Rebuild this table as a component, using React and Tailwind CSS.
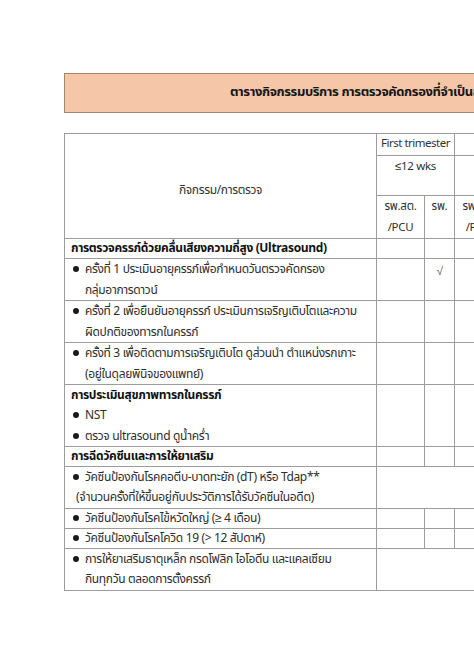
import React from 'react';

const GROUPS = [
  { label: 'First trimester', range: '≤12 wks' },
  { label: 'Second trimester', range: '13-27 wks' },
  { label: 'Third trimester', range: '28-40 wks' },
];

// data columns to the right of the activity column
const COLS = GROUPS.length * 2;

const ROWS = [
  { type: 'head', text: 'การตรวจครรภ์ด้วยคลื่นเสียงความถี่สูง (Ultrasound)' },
  {
    type: 'item',
    lines: ['ครั้งที่ 1 ประเมินอายุครรภ์เพื่อกำหนดวันตรวจคัดกรอง', 'กลุ่มอาการดาวน์'],
    marks: { 1: '√' },
  },
  { type: 'item', lines: ['ครั้งที่ 2 เพื่อยืนยันอายุครรภ์ ประเมินการเจริญเติบโตและความ', 'ผิดปกติของทารกในครรภ์'] },
  { type: 'item', lines: ['ครั้งที่ 3 เพื่อติดตามการเจริญเติบโต ดูส่วนนำ ตำแหน่งรกเกาะ', '(อยู่ในดุลยพินิจของแพทย์)'] },
  { type: 'group', head: 'การประเมินสุขภาพทารกในครรภ์', items: ['NST', 'ตรวจ ultrasound ดูน้ำคร่ำ'] },
  { type: 'head', text: 'การฉีดวัคซีนและการให้ยาเสริม' },
  {
    type: 'item',
    lines: ['วัคซีนป้องกันโรคคอตีบ-บาดทะยัก (dT) หรือ Tdap**', '(จำนวนครั้งที่ให้ขึ้นอยู่กับประวัติการได้รับวัคซีนในอดีต)'],
    merged: true,
    noIndent: true,
  },
  { type: 'item', lines: ['วัคซีนป้องกันโรคไข้หวัดใหญ่ (≥ 4 เดือน)'] },
  { type: 'item', lines: ['วัคซีนป้องกันโรคโควิด 19 (> 12 สัปดาห์)'] },
  { type: 'item', lines: ['การให้ยาเสริมธาตุเหล็ก กรดโฟลิก ไอโอดีน และแคลเซียม', 'กินทุกวัน ตลอดการตั้งครรภ์'], merged: true },
];

const cell = 'border border-[#9c9c9c] p-0';

const Bullet = () => <span className="inline-block w-[6px] h-[6px] rounded-full bg-[#1a1a1a] mr-[6px] mb-[1px]" />;

function DataCells({ marks = {}, merged }) {
  if (merged) return <td colSpan={COLS} className={cell} />;
  return Array.from({ length: COLS }).map((_, i) => (
    <td key={i} className={`${cell} align-top text-center text-[12px] text-[#666] pt-[2px]`}>
      {marks[i] || ''}
    </td>
  ));
}

export default function App() {
  return (
    <div className="w-[474px] h-[670px] overflow-hidden bg-white text-[#2e2e2e] font-[Noto_Sans_Thai,Noto_Sans,sans-serif]">
      <div className="w-[900px] pl-16 pt-[73px]">
        <div className="h-10 bg-[#f5c6a8] border border-[#a3866f] flex items-center pl-[165px] text-[13px] tracking-[-0.4px] font-bold text-[#151515] whitespace-nowrap">
          ตารางกิจกรรมบริการ การตรวจคัดกรองที่จำเป็นสำหรับหญิงตั้งครรภ์
        </div>

        <table className="mt-5 border-collapse border border-[#888] text-[12px] tracking-[-0.35px] leading-[20.5px] table-fixed w-[546px]">
          <colgroup>
            <col className="w-[312px]" />
            {GROUPS.map((g) => (
              <React.Fragment key={g.label}>
                <col className="w-[48px]" />
                <col className="w-[30px]" />
              </React.Fragment>
            ))}
          </colgroup>
          <thead>
            <tr>
              <td rowSpan={3} className={`${cell} align-middle text-center text-[#333] pt-[8px]`}>
                กิจกรรม/การตรวจ
              </td>
              {GROUPS.map((g, i) => (
                <td
                  key={g.label}
                  colSpan={2}
                  className={`${cell} h-[22px] align-middle text-center whitespace-nowrap overflow-hidden text-[11.5px] tracking-[-0.5px] text-[#333]`}
                >
                  {i === 0 ? g.label : ''}
                </td>
              ))}
            </tr>
            <tr>
              {GROUPS.map((g, i) => (
                <td key={g.range} colSpan={2} className={`${cell} h-[40px] align-top text-center pt-[1px] text-[11.5px] tracking-[-0.3px]`}>
                  {i === 0 ? g.range : ''}
                </td>
              ))}
            </tr>
            <tr>
              {GROUPS.map((g) => (
                <React.Fragment key={g.label}>
                  <td className={`${cell} h-[42px] align-top text-center text-[11.5px] tracking-[-0.3px] whitespace-nowrap leading-[21px]`}>
                    รพ.สต.
                    <br />
                    /PCU
                  </td>
                  <td className={`${cell} align-top text-center text-[11.5px] tracking-[-0.3px] leading-[21px]`}>รพ.</td>
                </React.Fragment>
              ))}
            </tr>
          </thead>
          <tbody>
            {ROWS.map((row, idx) => {
              if (row.type === 'head') {
                return (
                  <tr key={idx}>
                    <td className={`${cell} align-top px-[6px] font-bold text-[#111] leading-[19px] whitespace-nowrap`}>{row.text}</td>
                    <DataCells />
                  </tr>
                );
              }
              if (row.type === 'group') {
                return (
                  <tr key={idx}>
                    <td className={`${cell} align-top px-[6px] leading-[20.3px]`}>
                      <div className="font-bold text-[#111]">{row.head}</div>
                      {row.items.map((t) => (
                        <div key={t} className="pl-[2px]">
                          <Bullet />
                          {t}
                        </div>
                      ))}
                    </td>
                    <DataCells />
                  </tr>
                );
              }
              const single = row.lines.length === 1;
              return (
                <tr key={idx}>
                  <td className={`${cell} align-top px-[6px] ${single ? 'leading-[19px]' : ''}`}>
                    <div className="pl-[2px] whitespace-nowrap">
                      <Bullet />
                      {row.lines[0]}
                    </div>
                    {row.lines[1] && (
                      <div className={`whitespace-nowrap ${row.noIndent ? 'pl-[5px]' : 'pl-[14px]'}`}>{row.lines[1]}</div>
                    )}
                  </td>
                  <DataCells marks={row.marks} merged={row.merged} />
                </tr>
              );
            })}
          </tbody>
        </table>
      </div>
    </div>
  );
}
